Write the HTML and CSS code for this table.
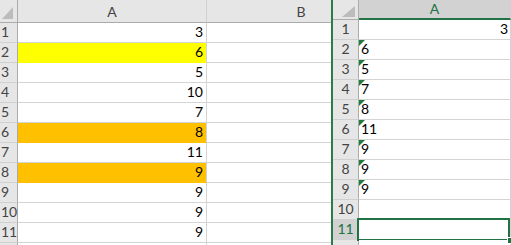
FILE: index.html
```html
<!DOCTYPE html>
<html lang="en">
<head>
<meta charset="utf-8">
<title>Sheet1</title>
<link rel="stylesheet" href="styles.css">
</head>
<body>
<div class="sheet">
  <div class="pane pane-left">
    <div class="grid grid-left">
      <div class="corner"><span class="corner-tri"></span></div>
      <div class="colhead">A</div>
      <div class="colhead">B</div>

      <div class="rowhead">1</div><div class="cell num">3</div><div class="cell"></div>
      <div class="rowhead">2</div><div class="cell num fill-yellow">6</div><div class="cell"></div>
      <div class="rowhead">3</div><div class="cell num">5</div><div class="cell"></div>
      <div class="rowhead">4</div><div class="cell num">10</div><div class="cell"></div>
      <div class="rowhead">5</div><div class="cell num">7</div><div class="cell"></div>
      <div class="rowhead">6</div><div class="cell num fill-orange">8</div><div class="cell"></div>
      <div class="rowhead">7</div><div class="cell num">11</div><div class="cell"></div>
      <div class="rowhead">8</div><div class="cell num fill-orange">9</div><div class="cell"></div>
      <div class="rowhead">9</div><div class="cell num">9</div><div class="cell"></div>
      <div class="rowhead">10</div><div class="cell num">9</div><div class="cell"></div>
      <div class="rowhead">11</div><div class="cell num">9</div><div class="cell"></div>
      <div class="rowhead"></div><div class="cell"></div><div class="cell"></div>
    </div>
  </div>

  <div class="split"></div>

  <div class="pane pane-right">
    <div class="grid grid-right">
      <div class="corner"><span class="corner-tri"></span></div>
      <div class="colhead is-active">A</div>

      <div class="rowhead">1</div><div class="cell num">3</div>
      <div class="rowhead">2</div><div class="cell text">6</div>
      <div class="rowhead">3</div><div class="cell text">5</div>
      <div class="rowhead">4</div><div class="cell text">7</div>
      <div class="rowhead">5</div><div class="cell text">8</div>
      <div class="rowhead">6</div><div class="cell text">11</div>
      <div class="rowhead">7</div><div class="cell text">9</div>
      <div class="rowhead">8</div><div class="cell text">9</div>
      <div class="rowhead">9</div><div class="cell text">9</div>
      <div class="rowhead">10</div><div class="cell"></div>
      <div class="rowhead is-active">11</div><div class="cell is-selected"></div>
      <div class="rowhead"></div><div class="cell"></div>
    </div>
  </div>
</div>
</body>
</html>
```

FILE: styles.css
```css
* {
  box-sizing: border-box;
}

html,
body {
  margin: 0;
  padding: 0;
  background: #ffffff;
}

body {
  font-family: Lato, "Liberation Sans", sans-serif;
  font-size: 14px;
  color: #000000;
  overflow: hidden;
}

.sheet {
  display: flex;
  width: 511px;
  height: 245px;
  overflow: hidden;
}

.pane {
  height: 245px;
  overflow: hidden;
  flex: none;
}

.pane-left {
  width: 331px;
}

.split {
  flex: none;
  width: 2px;
  background: #2f7a49;
}

.pane-right {
  width: 178px;
}

.grid {
  display: grid;
}

.grid-left {
  grid-template-columns: 18px 189px 189px;
  grid-template-rows: 23px repeat(12, 20px);
}

.grid-right {
  grid-template-columns: 26px 152px;
  grid-template-rows: 20px repeat(12, 20px);
}

/* headers */
.corner,
.colhead,
.rowhead {
  background: #e6e6e6;
  color: #444444;
  display: flex;
}

.corner {
  position: relative;
  border-right: 1px solid #ababab;
  border-bottom: 1px solid #ababab;
}

.corner-tri {
  position: absolute;
  right: 3px;
  bottom: 3px;
  width: 12px;
  height: 12px;
  background: #bcbcbc;
  clip-path: polygon(100% 0, 100% 100%, 0 100%);
}

.grid-left .corner-tri {
  right: 4px;
  bottom: 3px;
  width: 11px;
  height: 12px;
}

.grid-right .corner-tri {
  right: 3px;
  bottom: 2px;
  width: 13px;
  height: 11px;
}

.colhead {
  justify-content: center;
  align-items: flex-end;
  padding-bottom: 2px;
  line-height: 16px;
  border-right: 1px solid #d0d0d0;
  border-bottom: 1px solid #ababab;
}

.colhead.is-active {
  background: #d2d2d2;
  color: #217346;
  border-bottom: 2px solid #217346;
  padding-bottom: 1px;
}

.rowhead {
  align-items: flex-end;
  line-height: 16px;
  padding-bottom: 2px;
  border-right: 1px solid #ababab;
  border-bottom: 1px solid #d0d0d0;
}

.grid-left .rowhead {
  justify-content: flex-start;
  padding-left: 1px;
}

.grid-right .rowhead {
  justify-content: center;
}

.rowhead.is-active {
  background: #d2d2d2;
  color: #217346;
}

/* cells */
.cell {
  position: relative;
  display: flex;
  align-items: flex-end;
  line-height: 16px;
  padding: 0 2px 2px 2px;
  border-right: 1px solid #d4d4d4;
  border-bottom: 1px solid #d4d4d4;
  background: #ffffff;
}

.cell.num {
  justify-content: flex-end;
  padding-right: 3px;
}

.grid-right .cell.num {
  padding-right: 2px;
}

.cell.text {
  justify-content: flex-start;
}

/* number stored as text marker */
.cell.text::before {
  content: "";
  position: absolute;
  left: 0;
  top: 0;
  width: 6px;
  height: 6px;
  background: #1e7b3c;
  clip-path: polygon(0 0, 100% 0, 0 100%);
}

.fill-yellow {
  background: #ffff00;
  border-bottom-color: #ffff00;
}

.fill-orange {
  background: #ffc000;
  border-bottom-color: #ffc000;
}

/* active cell outline and fill handle */
.cell.is-selected::after {
  content: "";
  position: absolute;
  left: -2px;
  top: -2px;
  right: 0;
  bottom: -2px;
  border: 2px solid #217346;
}

.cell.is-selected::before {
  content: "";
  position: absolute;
  right: -3px;
  bottom: -4px;
  width: 5px;
  height: 5px;
  background: #217346;
  outline: 1px solid #ffffff;
  z-index: 1;
}
```
